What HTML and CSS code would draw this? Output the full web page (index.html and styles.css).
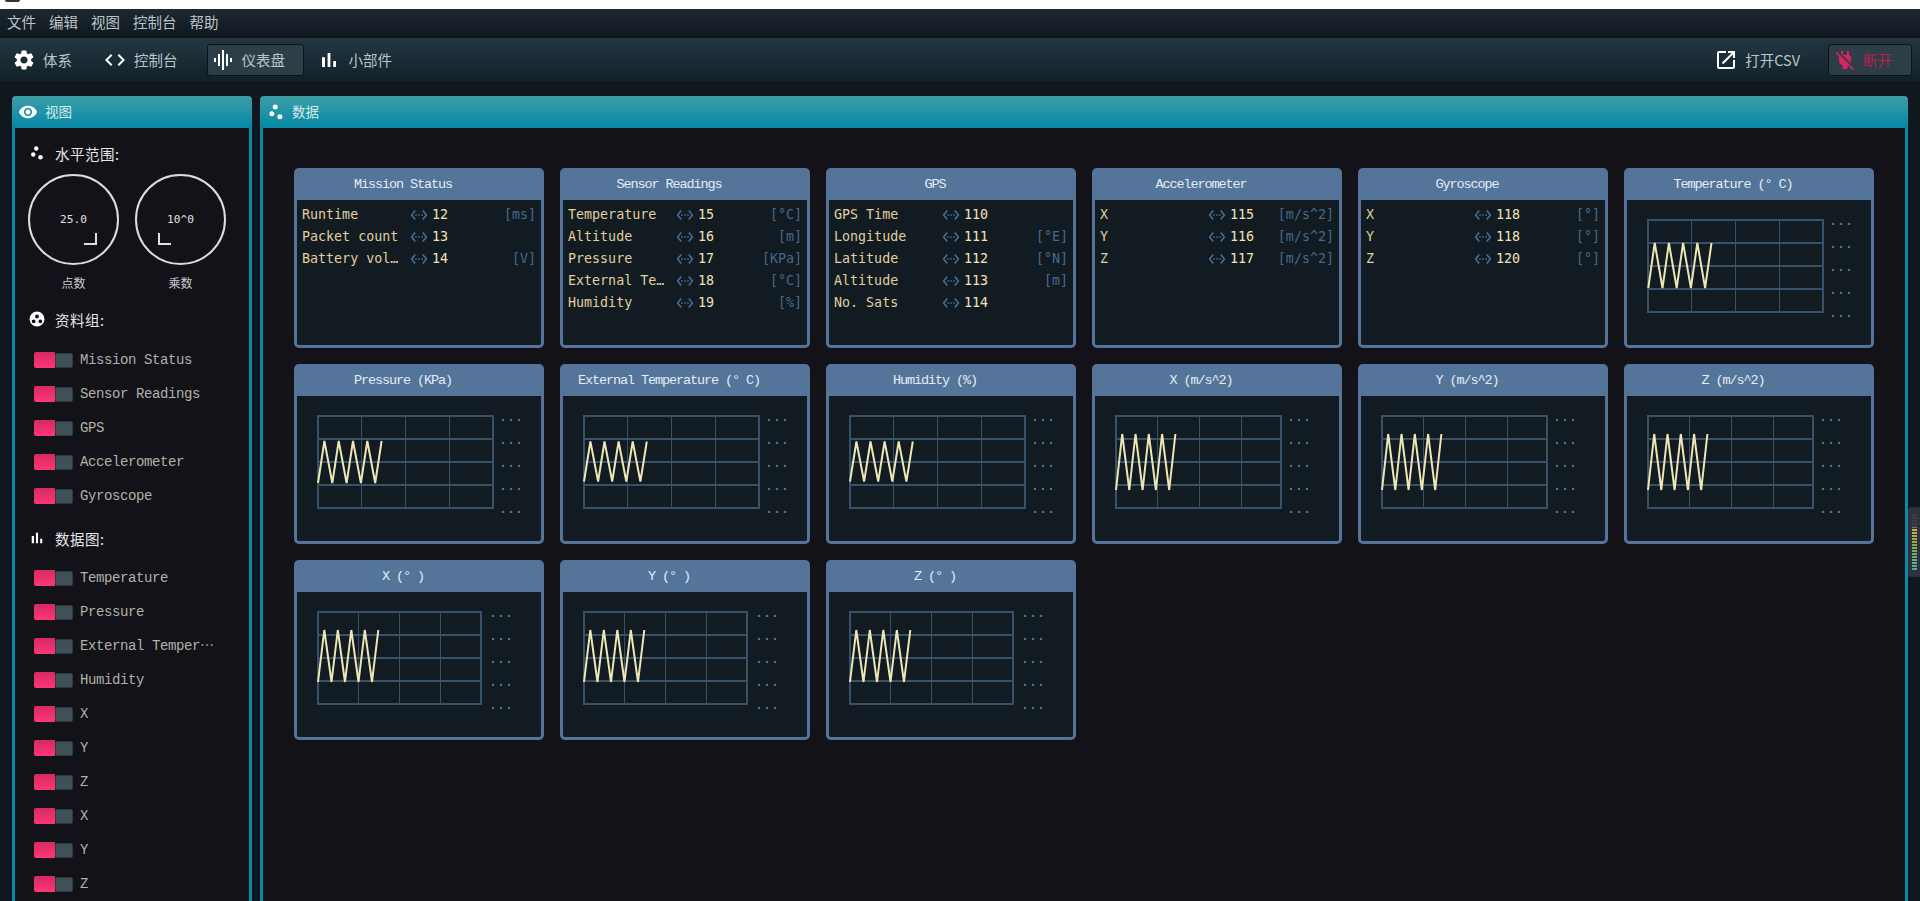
FILE: index.html
```html
<!DOCTYPE html>
<html lang="zh">
<head>
<meta charset="utf-8">
<title>Dashboard</title>
<link rel="stylesheet" href="styles.css">
</head>
<body>
<svg class="defs" aria-hidden="true">
  <defs>
    <g id="grid177" class="grid"><rect class="g-o" x="1" y="1" width="175" height="92"/><path class="g-h" d="M1 24H176M1 47H176M1 70H176"/><path class="g-v" d="M44.5 1V93M88.5 1V93M132.5 1V93"/></g>
    <g id="grid167" class="grid"><rect class="g-o" x="1" y="1" width="165" height="92"/><path class="g-h" d="M1 24H166M1 47H166M1 70H166"/><path class="g-v" d="M42.5 1V93M84.5 1V93M126.5 1V93"/></g>
    <g id="grid165" class="grid"><rect class="g-o" x="1" y="1" width="163" height="92"/><path class="g-h" d="M1 24H164M1 47H164M1 70H164"/><path class="g-v" d="M41.5 1V93M82.5 1V93M123.5 1V93"/></g>
    <path id="wave-temp" class="wave" d="M1.3 69l6.4-45 7.8 45 6.4-45 7.8 45 6.4-45 7.8 45 6.4-45 7.8 45 6.4-45"/>
    <path id="wave-press" class="wave" d="M1 68l6.4-42 7.9 42 6.4-42 7.9 42 6.4-42 7.9 42 6.4-42 7.9 42 6.4-42"/>
    <path id="wave-ext" class="wave" d="M1 66.5l6.4-40 7.7 40 6.4-40 7.7 40 6.4-40 7.7 40 6.4-40 7.7 40 6.4-40"/>
    <path id="wave-acc" class="wave" d="M1 75l6.2-56 7.1 56 6.2-56 7.1 56 6.2-56 7.1 56 6.2-56 7.1 56 6.2-56"/>
    <path id="wave-gyro" class="wave" d="M1 71l6.3-52 7.2 52 6.3-52 7.2 52 6.3-52 7.2 52 6.3-52 7.2 52 6.3-52"/>
    <path id="ic-arrows" d="M7.77 6.76L6.23 5.48.82 12l5.41 6.52 1.54-1.28L3.42 12l4.35-5.24zM7 13h2v-2H7v2zm10-2h-2v2h2v-2zm-6 2h2v-2h-2v2zm6.77-7.52l-1.54 1.28L20.58 12l-4.35 5.24 1.54 1.28L23.18 12l-5.41-6.52z"/>
    <g id="ic-scatter"><circle cx="7" cy="14" r="3"/><circle cx="11" cy="6" r="3"/><circle cx="16.6" cy="17.6" r="3"/></g>
    <path id="ic-bars" d="M5 9.2h3V19H5zM10.6 5h2.8v14h-2.8zm5.6 8H19v6h-2.8z"/>
  </defs>
</svg>

<div class="titlebar"><span class="app-icon"></span></div>

<nav class="menubar">
  <span>文件</span><span>编辑</span><span>视图</span><span>控制台</span><span>帮助</span>
</nav>

<header class="toolbar">
  <div class="tool tool-system">
    <svg class="ic" viewBox="0 0 24 24"><path d="M19.14 12.94c.04-.3.06-.61.06-.94 0-.32-.02-.64-.07-.94l2.03-1.58c.18-.14.23-.41.12-.61l-1.92-3.32c-.12-.22-.37-.29-.59-.22l-2.39.96c-.5-.38-1.03-.7-1.62-.94l-.36-2.54c-.04-.24-.24-.41-.48-.41h-3.84c-.24 0-.43.17-.47.41l-.36 2.54c-.59.24-1.13.57-1.62.94l-2.39-.96c-.22-.08-.47 0-.59.22L2.74 8.87c-.12.21-.08.47.12.61l2.03 1.58c-.05.3-.09.63-.09.94s.02.64.07.94l-2.03 1.58c-.18.14-.23.41-.12.61l1.92 3.32c.12.22.37.29.59.22l2.39-.96c.5.38 1.03.7 1.62.94l.36 2.54c.05.24.24.41.48.41h3.84c.24 0 .44-.17.47-.41l.36-2.54c.59-.24 1.13-.56 1.62-.94l2.39.96c.22.08.47 0 .59-.22l1.92-3.32c.12-.22.07-.47-.12-.61l-2.01-1.58zM12 15.6c-1.98 0-3.6-1.62-3.6-3.6s1.62-3.6 3.6-3.6 3.6 1.62 3.6 3.6-1.62 3.6-3.6 3.6z"/></svg>
    <span>体系</span>
  </div>
  <div class="tool tool-console">
    <svg class="ic" viewBox="0 0 24 24"><path d="M9.4 16.6L4.8 12l4.6-4.6L8 6l-6 6 6 6 1.4-1.4zm5.2 0l4.6-4.6-4.6-4.6L16 6l6 6-6 6-1.4-1.4z"/></svg>
    <span>控制台</span>
  </div>
  <div class="tool tool-btn tool-dash">
    <svg class="ic" viewBox="0 0 24 24"><path d="M7 18h2V6H7v12zm4 4h2V2h-2v20zm-8-8h2v-4H3v4zm12 4h2V6h-2v12zm4-8v4h2v-4h-2z"/></svg>
    <span>仪表盘</span>
  </div>
  <div class="tool tool-widgets">
    <svg class="ic" viewBox="0 0 24 24"><use href="#ic-bars"/></svg>
    <span>小部件</span>
  </div>
  <div class="toolbar-spacer"></div>
  <div class="tool tool-open">
    <svg class="ic" viewBox="0 0 24 24"><path d="M19 19H5V5h7V3H5c-1.11 0-2 .9-2 2v14c0 1.1.89 2 2 2h14c1.1 0 2-.9 2-2v-7h-2v7zM14 3v2h3.59l-9.83 9.83 1.41 1.41L19 6.41V10h2V3h-7z"/></svg>
    <span>打开CSV</span>
  </div>
  <div class="tool tool-btn tool-off">
    <svg class="ic" viewBox="0 0 24 24"><path d="M18 14.49V9c0-1-1.01-2.01-2-2V3h-2v4h-4V3H8v2.48l9.51 9.5.49-.49zm-1.76 1.77L7.2 7.2l-.01.01L3.98 4 2.71 5.25l3.36 3.36C6.04 8.74 6 8.87 6 9v5.48L9.5 18v3h5v-3l.48-.48L19.45 22l1.26-1.28-4.47-4.46z"/></svg>
    <span>断开</span>
  </div>
</header>

<main class="workspace">
  <aside class="panel panel-view">
    <div class="panel-head">
      <svg class="ic-head ic-eye" viewBox="0 0 24 24"><path d="M12 4.5C7 4.5 2.73 7.61 1 12c1.73 4.39 6 7.5 11 7.5s9.27-3.11 11-7.5c-1.73-4.39-6-7.5-11-7.5zM12 17c-2.76 0-5-2.24-5-5s2.24-5 5-5 5 2.24 5 5-2.24 5-5 5zm0-8c-1.66 0-3 1.34-3 3s1.34 3 3 3 3-1.34 3-3-1.34-3-3-3z"/></svg>
      <span>视图</span>
    </div>
    <div class="panel-body side">
      <div class="side-title"><svg class="ic-side" viewBox="0 0 24 24"><use href="#ic-scatter"/></svg><span>水平范围:</span></div>
      <div class="knobs">
        <div class="knob-wrap">
          <div class="knob knob-right">25.0</div>
          <div class="knob-label">点数</div>
        </div>
        <div class="knob-wrap">
          <div class="knob knob-left">10^0</div>
          <div class="knob-label">乘数</div>
        </div>
      </div>

      <div class="side-title title-group"><svg class="ic-side" viewBox="0 0 24 24"><path d="M12 2a10 10 0 1 0 0 20 10 10 0 0 0 0-20zM12 6a2.6 2.6 0 1 1 0 5.2A2.6 2.6 0 0 1 12 6zM7.5 12.5a2.6 2.6 0 1 1 0 5.2 2.6 2.6 0 0 1 0-5.2zM16.500 12.500a2.6 2.6 0 1 1 0 5.2 2.6 2.6 0 0 1 0-5.200z" fill-rule="evenodd"/></svg><span>资料组:</span></div>
      <ul class="toggles">
        <li><i class="sw"><b></b><u></u></i><span>Mission Status</span></li>
        <li><i class="sw"><b></b><u></u></i><span>Sensor Readings</span></li>
        <li><i class="sw"><b></b><u></u></i><span>GPS</span></li>
        <li><i class="sw"><b></b><u></u></i><span>Accelerometer</span></li>
        <li><i class="sw"><b></b><u></u></i><span>Gyroscope</span></li>
      </ul>

      <div class="side-title title-plots"><svg class="ic-side" viewBox="0 0 24 24"><use href="#ic-bars"/></svg><span>数据图:</span></div>
      <ul class="toggles toggles-plots">
        <li><i class="sw"><b></b><u></u></i><span>Temperature</span></li>
        <li><i class="sw"><b></b><u></u></i><span>Pressure</span></li>
        <li><i class="sw"><b></b><u></u></i><span>External Temper⋯</span></li>
        <li><i class="sw"><b></b><u></u></i><span>Humidity</span></li>
        <li><i class="sw"><b></b><u></u></i><span>X</span></li>
        <li><i class="sw"><b></b><u></u></i><span>Y</span></li>
        <li><i class="sw"><b></b><u></u></i><span>Z</span></li>
        <li><i class="sw"><b></b><u></u></i><span>X</span></li>
        <li><i class="sw"><b></b><u></u></i><span>Y</span></li>
        <li><i class="sw"><b></b><u></u></i><span>Z</span></li>
      </ul>
    </div>
  </aside>

  <section class="panel panel-data">
    <div class="panel-head">
      <svg class="ic-head" viewBox="0 0 24 24"><use href="#ic-scatter"/></svg>
      <span>数据</span>
    </div>
    <div class="panel-body cards">

      <article class="card">
        <h3>Mission Status</h3>
        <div class="card-body rows">
          <div class="row"><span class="k">Runtime</span><svg class="ar" viewBox="0 0 24 24"><use href="#ic-arrows"/></svg><span class="v">12</span><span class="u">[ms]</span></div>
          <div class="row"><span class="k">Packet count</span><svg class="ar" viewBox="0 0 24 24"><use href="#ic-arrows"/></svg><span class="v">13</span></div>
          <div class="row"><span class="k">Battery vol…</span><svg class="ar" viewBox="0 0 24 24"><use href="#ic-arrows"/></svg><span class="v">14</span><span class="u">[V]</span></div>
        </div>
      </article>

      <article class="card">
        <h3>Sensor Readings</h3>
        <div class="card-body rows">
          <div class="row"><span class="k">Temperature</span><svg class="ar" viewBox="0 0 24 24"><use href="#ic-arrows"/></svg><span class="v">15</span><span class="u">[°C]</span></div>
          <div class="row"><span class="k">Altitude</span><svg class="ar" viewBox="0 0 24 24"><use href="#ic-arrows"/></svg><span class="v">16</span><span class="u">[m]</span></div>
          <div class="row"><span class="k">Pressure</span><svg class="ar" viewBox="0 0 24 24"><use href="#ic-arrows"/></svg><span class="v">17</span><span class="u">[KPa]</span></div>
          <div class="row"><span class="k">External Te…</span><svg class="ar" viewBox="0 0 24 24"><use href="#ic-arrows"/></svg><span class="v">18</span><span class="u">[°C]</span></div>
          <div class="row"><span class="k">Humidity</span><svg class="ar" viewBox="0 0 24 24"><use href="#ic-arrows"/></svg><span class="v">19</span><span class="u">[%]</span></div>
        </div>
      </article>

      <article class="card">
        <h3>GPS</h3>
        <div class="card-body rows">
          <div class="row"><span class="k">GPS Time</span><svg class="ar" viewBox="0 0 24 24"><use href="#ic-arrows"/></svg><span class="v">110</span></div>
          <div class="row"><span class="k">Longitude</span><svg class="ar" viewBox="0 0 24 24"><use href="#ic-arrows"/></svg><span class="v">111</span><span class="u">[°E]</span></div>
          <div class="row"><span class="k">Latitude</span><svg class="ar" viewBox="0 0 24 24"><use href="#ic-arrows"/></svg><span class="v">112</span><span class="u">[°N]</span></div>
          <div class="row"><span class="k">Altitude</span><svg class="ar" viewBox="0 0 24 24"><use href="#ic-arrows"/></svg><span class="v">113</span><span class="u">[m]</span></div>
          <div class="row"><span class="k">No. Sats</span><svg class="ar" viewBox="0 0 24 24"><use href="#ic-arrows"/></svg><span class="v">114</span></div>
        </div>
      </article>

      <article class="card">
        <h3>Accelerometer</h3>
        <div class="card-body rows">
          <div class="row"><span class="k">X</span><svg class="ar" viewBox="0 0 24 24"><use href="#ic-arrows"/></svg><span class="v">115</span><span class="u">[m/s^2]</span></div>
          <div class="row"><span class="k">Y</span><svg class="ar" viewBox="0 0 24 24"><use href="#ic-arrows"/></svg><span class="v">116</span><span class="u">[m/s^2]</span></div>
          <div class="row"><span class="k">Z</span><svg class="ar" viewBox="0 0 24 24"><use href="#ic-arrows"/></svg><span class="v">117</span><span class="u">[m/s^2]</span></div>
        </div>
      </article>

      <article class="card">
        <h3>Gyroscope</h3>
        <div class="card-body rows">
          <div class="row"><span class="k">X</span><svg class="ar" viewBox="0 0 24 24"><use href="#ic-arrows"/></svg><span class="v">118</span><span class="u">[°]</span></div>
          <div class="row"><span class="k">Y</span><svg class="ar" viewBox="0 0 24 24"><use href="#ic-arrows"/></svg><span class="v">118</span><span class="u">[°]</span></div>
          <div class="row"><span class="k">Z</span><svg class="ar" viewBox="0 0 24 24"><use href="#ic-arrows"/></svg><span class="v">120</span><span class="u">[°]</span></div>
        </div>
      </article>

      <article class="card">
        <h3>Temperature (° C)</h3>
        <div class="card-body plot">
          <svg class="chart w177"><use href="#grid177"/><use href="#wave-temp"/></svg>
          <div class="ticks"><span>...</span><span>...</span><span>...</span><span>...</span><span>...</span></div>
        </div>
      </article>

      <article class="card">
        <h3>Pressure (KPa)</h3>
        <div class="card-body plot">
          <svg class="chart w177"><use href="#grid177"/><use href="#wave-press"/></svg>
          <div class="ticks"><span>...</span><span>...</span><span>...</span><span>...</span><span>...</span></div>
        </div>
      </article>

      <article class="card">
        <h3>External Temperature (° C)</h3>
        <div class="card-body plot">
          <svg class="chart w177"><use href="#grid177"/><use href="#wave-ext"/></svg>
          <div class="ticks"><span>...</span><span>...</span><span>...</span><span>...</span><span>...</span></div>
        </div>
      </article>

      <article class="card">
        <h3>Humidity (%)</h3>
        <div class="card-body plot">
          <svg class="chart w177"><use href="#grid177"/><use href="#wave-ext"/></svg>
          <div class="ticks"><span>...</span><span>...</span><span>...</span><span>...</span><span>...</span></div>
        </div>
      </article>

      <article class="card">
        <h3>X (m/s^2)</h3>
        <div class="card-body plot">
          <svg class="chart w167"><use href="#grid167"/><use href="#wave-acc"/></svg>
          <div class="ticks"><span>...</span><span>...</span><span>...</span><span>...</span><span>...</span></div>
        </div>
      </article>

      <article class="card">
        <h3>Y (m/s^2)</h3>
        <div class="card-body plot">
          <svg class="chart w167"><use href="#grid167"/><use href="#wave-acc"/></svg>
          <div class="ticks"><span>...</span><span>...</span><span>...</span><span>...</span><span>...</span></div>
        </div>
      </article>

      <article class="card">
        <h3>Z (m/s^2)</h3>
        <div class="card-body plot">
          <svg class="chart w167"><use href="#grid167"/><use href="#wave-acc"/></svg>
          <div class="ticks"><span>...</span><span>...</span><span>...</span><span>...</span><span>...</span></div>
        </div>
      </article>

      <article class="card">
        <h3>X (° )</h3>
        <div class="card-body plot">
          <svg class="chart w165"><use href="#grid165"/><use href="#wave-gyro"/></svg>
          <div class="ticks"><span>...</span><span>...</span><span>...</span><span>...</span><span>...</span></div>
        </div>
      </article>

      <article class="card">
        <h3>Y (° )</h3>
        <div class="card-body plot">
          <svg class="chart w165"><use href="#grid165"/><use href="#wave-gyro"/></svg>
          <div class="ticks"><span>...</span><span>...</span><span>...</span><span>...</span><span>...</span></div>
        </div>
      </article>

      <article class="card">
        <h3>Z (° )</h3>
        <div class="card-body plot">
          <svg class="chart w165"><use href="#grid165"/><use href="#wave-gyro"/></svg>
          <div class="ticks"><span>...</span><span>...</span><span>...</span><span>...</span><span>...</span></div>
        </div>
      </article>

    </div>
  </section>
</main>

<div class="meter"></div>
</body>
</html>
```

FILE: styles.css
```css
* { box-sizing: border-box; }

html, body {
  margin: 0;
  height: 901px;
  overflow: hidden;
}

body {
  position: relative;
  display: flex;
  flex-direction: column;
  background: #10181f;
  font-family: "Noto Sans CJK SC", "Liberation Sans", sans-serif;
  color: #d8dde0;
}

.defs { position: absolute; width: 0; height: 0; }

.titlebar {
  height: 9px;
  background: #fff;
  flex: none;
  position: relative;
}

.app-icon {
  position: absolute;
  left: 5px;
  top: 0;
  width: 15px;
  height: 2px;
  background: #333;
  border-radius: 0 0 4px 4px;
}

.menubar {
  flex: none;
  height: 28px;
  display: flex;
  align-items: center;
  gap: 13px;
  padding: 0 0 2px 7px;
  background: linear-gradient(#1d2832, #10181f);
  font-size: 14.5px;
  line-height: 26px;
  color: #bcc3c8;
}

.toolbar {
  flex: none;
  height: 46px;
  display: flex;
  align-items: center;
  background: linear-gradient(#243740, #10212a);
  border-top: 1px solid #0e151b;
  border-bottom: 1px solid #0e151b;
  font-size: 14.5px;
  color: #b9c6cb;
}

.toolbar-spacer { flex: 1; }

.tool {
  display: flex;
  align-items: center;
  height: 32px;
  gap: 8px;
}

.tool span { padding-bottom: 2px; }
.tool .ic { width: 24px; height: 24px; fill: #fff; flex: none; }

.tool-system { margin-left: 12px; gap: 7px; }
.tool-console { margin-left: 31px; gap: 7px; }
.tool-dash { margin-left: 29px; }
.tool-widgets { margin-left: 13px; }
.tool-open { margin-right: 28px; gap: 7px; }
.tool-off { margin-right: 8px; color: #b5234f; }
.tool-off .ic { fill: #d9235f; }

.tool-btn {
  width: 97px;
  background: #2d3e48;
  border: 1px solid #0c1216;
  border-radius: 3px;
  padding-left: 3px;
  gap: 7px;
}

.tool-off { width: 84px; padding-left: 4px; gap: 6px; }

.workspace {
  flex: 1;
  display: flex;
  gap: 8px;
  padding: 13px 12px 0;
  min-height: 0;
}

.panel {
  display: flex;
  flex-direction: column;
  border-radius: 4px 4px 0 0;
  min-height: 820px;
}

.panel-view { width: 240px; flex: none; }
.panel-data { flex: 1; }

.panel-head {
  flex: none;
  height: 32px;
  display: flex;
  align-items: center;
  border-radius: 4px 4px 0 0;
  background: linear-gradient(#3d9ea5, #0588a6);
  color: #d8ecee;
  font-size: 13.5px;
  padding-left: 6px;
  gap: 7px;
}

.panel-head span { padding-bottom: 2px; }
.ic-head { width: 20px; height: 20px; fill: #fff; flex: none; }
.panel-data .panel-head { gap: 6px; padding-left: 6px; }

.panel-body {
  flex: 1;
  background: #121218;
  border-left: 3px solid #0b8ba5;
  border-right: 3px solid #0b8ba5;
}

.side { padding: 15px 0 0 13px; }

.side-title {
  display: flex;
  align-items: center;
  height: 20px;
  gap: 9px;
  font-size: 14.5px;
  letter-spacing: .5px;
  color: #e4e6e8;
}

.ic-side { width: 18px; height: 18px; fill: #fff; flex: none; }

.title-group { margin-top: 18px; }
.title-plots { margin-top: 15px; }

.knobs {
  display: flex;
  gap: 16px;
  margin-top: 11px;
}

.knob-wrap {
  width: 91px;
  display: flex;
  flex-direction: column;
  align-items: center;
}

.knob {
  position: relative;
  width: 91px;
  height: 91px;
  border: 2px solid #dcdcdc;
  border-radius: 50%;
  display: flex;
  align-items: center;
  justify-content: center;
  font: 11.2px/1 "DejaVu Sans Mono", monospace;
  color: #e0e0e0;
}

.knob::after {
  content: "";
  position: absolute;
  width: 11px;
  height: 10px;
  bottom: 18px;
  border-bottom: 2.5px solid #e0e0e0;
}

.knob-right::after { right: 20px; border-right: 2.5px solid #e0e0e0; }
.knob-left::after { left: 21px; border-left: 2.5px solid #e0e0e0; }

.knob-label {
  margin-top: 10px;
  font-size: 12px;
  line-height: 16px;
  color: #c8ccd0;
}

.toggles {
  list-style: none;
  margin: 14px 0 0;
  padding: 0 0 0 6px;
}

.toggles-plots { margin-top: 13px; }

.toggles li {
  display: flex;
  align-items: center;
  height: 34px;
  gap: 7px;
  font: 14px/34px "Liberation Mono", "Noto Sans CJK SC", monospace;
  letter-spacing: -.4px;
  color: #b5b1a7;
  white-space: nowrap;
}

.sw { display: flex; width: 39px; height: 16px; flex: none; }

.sw b {
  display: block;
  width: 21px;
  height: 16px;
  background: linear-gradient(#d62a62, #ff3578);
  border-radius: 2px 0 0 2px;
}

.sw u {
  display: block;
  width: 18px;
  height: 15px;
  margin-top: 1px;
  background: #3f5059;
  border: 1px solid #2c3a42;
  border-radius: 2px;
}

.cards {
  display: grid;
  grid-template-columns: repeat(6, 250px);
  grid-auto-rows: 180px;
  gap: 16px;
  align-content: start;
  padding: 40px 0 0 31px;
}

.card {
  display: flex;
  flex-direction: column;
  background: #54749a;
  border: 3px solid #54749a;
  border-radius: 5px;
  min-width: 0;
}

.card h3 {
  flex: none;
  height: 29px;
  margin: 0;
  padding-right: 32px;
  text-align: center;
  font: 400 13.5px/27px "Liberation Mono", monospace;
  letter-spacing: -1.1px;
  color: #e2edf6;
  white-space: nowrap;
}

.card-body {
  flex: 1;
  background: #111b21;
  border-radius: 0 0 2px 2px;
  min-height: 0;
}

.rows { padding: 4px 5px 0 5px; }

.row {
  display: flex;
  align-items: center;
  height: 22px;
  font: 13.33px/22px "DejaVu Sans Mono", monospace;
}

.k {
  width: 108px;
  flex: none;
  color: #e2cf9f;
  white-space: nowrap;
  overflow: hidden;
}

.ar { width: 18px; height: 18px; flex: none; fill: #4a7196; }
.v { margin-left: 4px; color: #f2e3b6; }
.u { margin-left: auto; color: #46698e; }

.plot {
  display: flex;
  align-items: flex-start;
  padding: 19px 0 0 20px;
}

.chart { flex: none; height: 94px; overflow: visible; }
.w177 { width: 177px; }
.w167 { width: 167px; }
.w165 { width: 165px; margin-right: 2px; }

.g-o, .g-h, .g-v { fill: none; stroke: #38516a; }
.g-o, .g-h { stroke-width: 2; }
.g-v { stroke-width: 1; }

.wave {
  fill: none;
  stroke: #efe6b6;
  stroke-width: 2;
  stroke-linejoin: miter;
}

.ticks {
  display: flex;
  flex-direction: column;
  margin: -10px 0 0 5px;
  font: 13.33px/23px "DejaVu Sans Mono", monospace;
  color: #5a86ad;
}

.meter {
  position: absolute;
  right: 0;
  top: 507px;
  width: 12px;
  height: 70px;
  border-radius: 4px 0 0 4px;
  background:
    repeating-linear-gradient(#2e3140 0 1px, transparent 1px 3px) 4px 6px / 5px 58px no-repeat,
    linear-gradient(#3a3d4c 0 24%, #c9b13a 26%, #8fa84a 55%, #4fae96 100%) 4px 6px / 5px 58px no-repeat,
    #2e3140;
}
```
